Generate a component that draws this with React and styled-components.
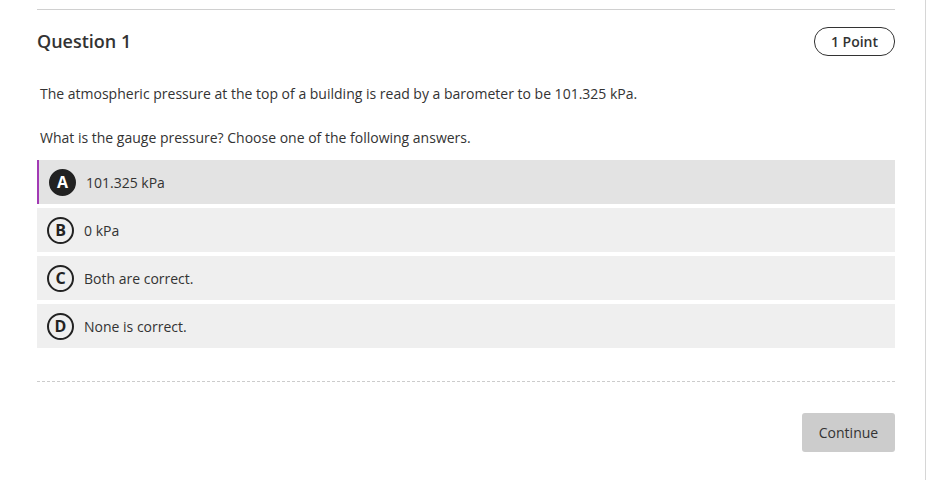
import React from "react";
import styled, { createGlobalStyle } from "styled-components";

const GlobalStyle = createGlobalStyle`
  body {
    margin: 0;
    background: #fff;
    font-family: "Open Sans", "Noto Sans", Arial, sans-serif;
    color: #333;
  }
`;

const answers = [
  { letter: "A", text: "101.325 kPa", selected: true },
  { letter: "B", text: "0 kPa" },
  { letter: "C", text: "Both are correct." },
  { letter: "D", text: "None is correct." },
];

const App = () => {
  return (
    <>
      <GlobalStyle />
      <Page>
        <Card>
          <Header>
            <Title>Question 1</Title>
            <Points>1 Point</Points>
          </Header>
          <Text>
            The atmospheric pressure at the top of a building is read by a
            barometer to be 101.325 kPa.
          </Text>
          <Text>What is the gauge pressure? Choose one of the following answers.</Text>
          <Options>
            {answers.map((a) => (
              <Option key={a.letter} $selected={a.selected}>
                <Letter $selected={a.selected}>{a.letter}</Letter>
                <OptionText>{a.text}</OptionText>
              </Option>
            ))}
          </Options>
          <Footer>
            <Button>Continue</Button>
          </Footer>
        </Card>
      </Page>
    </>
  );
};

export default App;

const Page = styled.div`
  width: 926px;
  min-height: 480px;
  border-right: 1px solid #d6d6d6;
  box-sizing: border-box;
  padding: 9px 30px 0 37px;
`;

const Card = styled.div`
  border-top: 1px solid #d0d0d0;
`;

const Header = styled.div`
  display: flex;
  justify-content: space-between;
  align-items: center;
  padding-top: 17px;
  height: 28px;
`;

const Title = styled.h2`
  margin: 0;
  font-size: 18px;
  font-weight: 600;
  color: #333;
`;

const Points = styled.div`
  display: flex;
  align-items: center;
  justify-content: center;
  width: 79px;
  height: 27px;
  border: 1px solid #333;
  border-radius: 14px;
  font-size: 14px;
  font-weight: 600;
  color: #333;
`;

const Text = styled.p`
  margin: 29px 0 0 3px;
  font-size: 14px;
  line-height: 20px;
  color: #333;
  & + & {
    margin-top: 24px;
  }
`;

const Options = styled.div`
  display: flex;
  flex-direction: column;
  gap: 4px;
  margin-top: 12px;
  padding-bottom: 33px;
  border-bottom: 1px dashed #ccc;
`;

const Option = styled.div`
  display: flex;
  align-items: center;
  gap: 10px;
  height: 44px;
  box-sizing: border-box;
  padding-left: 10px;
  background: ${(p) => (p.$selected ? "#e3e3e3" : "#efefef")};
  border-left: ${(p) => (p.$selected ? "2px solid #a23ab4" : "none")};
`;

const Letter = styled.span`
  display: flex;
  align-items: center;
  justify-content: center;
  flex-shrink: 0;
  width: 27px;
  height: 27px;
  box-sizing: border-box;
  border-radius: 50%;
  font-size: 16px;
  font-weight: 700;
  background: ${(p) => (p.$selected ? "#222" : "transparent")};
  color: ${(p) => (p.$selected ? "#fff" : "#222")};
  border: 2px solid #222;
`;

const OptionText = styled.span`
  font-size: 14px;
  color: #333;
`;

const Footer = styled.div`
  display: flex;
  justify-content: flex-end;
  padding-top: 31px;
`;

const Button = styled.button`
  width: 93px;
  height: 39px;
  border: none;
  border-radius: 3px;
  background: #cccccc;
  font-family: "Open Sans", "Noto Sans", Arial, sans-serif;
  font-size: 14px;
  color: #333;
  cursor: pointer;
`;
